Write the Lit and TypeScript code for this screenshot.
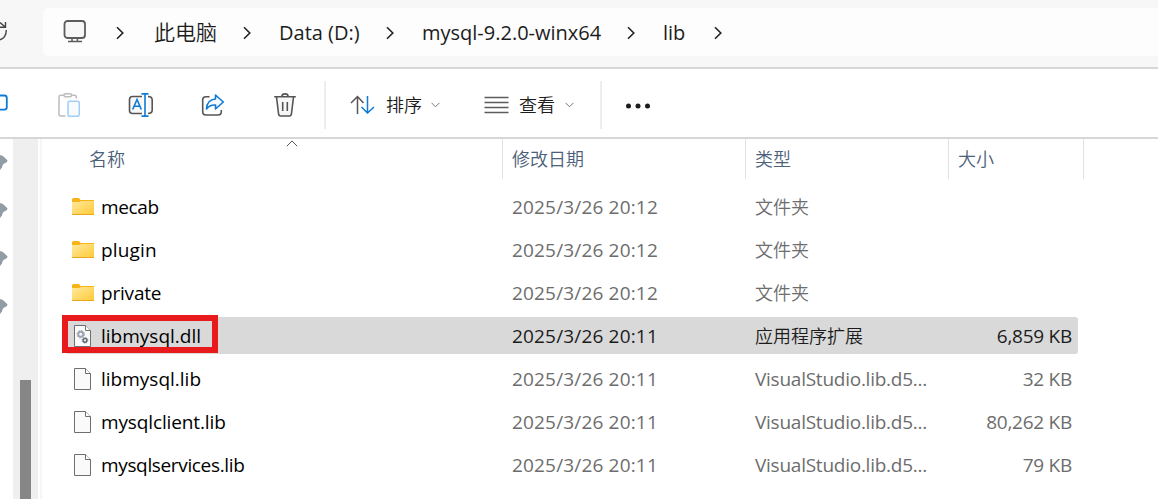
import { LitElement, html, css, svg, nothing } from 'lit';
import { customElement, property } from 'lit/decorators.js';
import { classMap } from 'lit/directives/class-map.js';
import { styleMap } from 'lit/directives/style-map.js';

type Kind = 'folder' | 'dll' | 'file';

interface Entry {
	name: string;
	date: string;
	type: string;
	size?: string;
	kind: Kind;
	selected?: boolean;
	// letter spacing of the name, px
	track: number;
}

const ENTRIES: Entry[] = [
	{ name: 'mecab', date: '2025/3/26 20:12', type: '文件夹', kind: 'folder', track: -0.35 },
	{ name: 'plugin', date: '2025/3/26 20:12', type: '文件夹', kind: 'folder', track: 0.15 },
	{ name: 'private', date: '2025/3/26 20:12', type: '文件夹', kind: 'folder', track: -0.2 },
	{ name: 'libmysql.dll', date: '2025/3/26 20:11', type: '应用程序扩展', size: '6,859 KB', kind: 'dll', selected: true, track: 0 },
	{ name: 'libmysql.lib', date: '2025/3/26 20:11', type: 'VisualStudio.lib.d5...', size: '32 KB', kind: 'file', track: 0 },
	{ name: 'mysqlclient.lib', date: '2025/3/26 20:11', type: 'VisualStudio.lib.d5...', size: '80,262 KB', kind: 'file', track: -0.13 },
	{ name: 'mysqlservices.lib', date: '2025/3/26 20:11', type: 'VisualStudio.lib.d5...', size: '79 KB', kind: 'file', track: -0.35 },
];

const chevron = html`
	<svg width="8" height="14" viewBox="0 0 8 14" fill="none" stroke="#222" stroke-width="1.6">
		<path d="M1 1.2L6.8 7L1 12.8" />
	</svg>
`;

const chevronDown = html`
	<svg width="9" height="6" viewBox="0 0 9 6" fill="none" stroke="#777" stroke-width="1">
		<path d="M.5 .8L4.5 4.8L8.5 .8" />
	</svg>
`;

/**
 * Address bar with the path of the open folder
 */
@customElement('path-bar')
export class PathBar extends LitElement {
	static styles = css`
		:host {
			display: flex;
			align-items: center;
			box-sizing: border-box;
			height: 69px;
			padding-bottom: 3px;
			background: #f7f7f7;
			border-bottom: 2px solid #d7d7d7;
			color: #1c1c1c;
			font-size: 20px;
		}
		.reload {
			width: 43px;
			height: 26px;
		}
		.path {
			display: grid;
			grid-template-columns: 73px 38px 89px 36px 107px 36px 205px 36px 51px 20px;
			align-items: center;
			flex: 1;
			height: 48px;
			box-sizing: border-box;
			background: #fdfdfd;
			border-radius: 6px 0 0 6px;
			white-space: nowrap;
		}
		.path svg {
			margin-top: 1px;
		}
		.path .pc {
			padding-left: 20px;
			margin-top: -2px;
		}
		.cjk {
			font-family: 'Noto Sans CJK SC', sans-serif;
			font-weight: 350;
			font-size: 21px;
			line-height: 24px;
			padding-bottom: 2px;
		}
		svg {
			display: block;
		}
	`;

	render() {
		return html`
			<svg class="reload" viewBox="0 0 43 26" fill="none" stroke="#444" stroke-width="1.4">
				<path d="M0 3.500L5 7.800M5.500 3V8.300H0M6.300 11Q6.300 18.500 0 20.800" />
			</svg>
			<div class="path">
				<svg class="pc" width="24" height="24" viewBox="0 0 24 24" fill="none" stroke="#5c5c5c" stroke-width="1.800">
					<rect x="1.500" y="2" width="20.500" height="17" rx="3" fill="#f7f7f7" />
					<path d="M9 19v3.500M14.500 19v3.500M5 22.600h14" stroke-width="1.500" />
				</svg>
				${chevron}
				<span class="cjk">此电脑</span>
				${chevron}
				<span>Data (D:)</span>
				${chevron}
				<span>mysql-9.2.0-winx64</span>
				${chevron}
				<span>lib</span>
				${chevron}
			</div>
		`;
	}
}

/**
 * Row of file commands
 */
@customElement('command-bar')
export class CommandBar extends LitElement {
	static styles = css`
		:host {
			display: flex;
			align-items: center;
			box-sizing: border-box;
			height: 70px;
			padding-top: 4px;
			background: #fff;
			border-bottom: 2px solid #d7d7d7;
			color: #1c1c1c;
			font-family: 'Noto Sans CJK SC', sans-serif;
			font-weight: 350;
			font-size: 18px;
		}
		svg {
			display: block;
			flex: none;
		}
		.icons {
			display: flex;
			gap: 48px;
			width: 324px;
		}
		.icons svg:nth-child(3) {
			margin-right: -2px;
		}
		.icons svg:nth-child(4) {
			margin-right: 1px;
		}
		.sep {
			width: 2px;
			height: 48px;
			background: #ededed;
		}
		.menu {
			display: flex;
			align-items: center;
		}
		.menu span {
			width: 46px;
			padding-left: 11px;
			padding-bottom: 2px;
			line-height: 24px;
		}
		.sort {
			box-sizing: border-box;
			padding-left: 24px;
			width: 158px;
		}
		.sort span {
			width: 45px;
		}
		.view {
			width: 116px;
		}
		.view span {
			padding-left: 10px;
		}
		.more {
			margin-left: 23px;
			margin-top: 1px;
		}
	`;

	render() {
		return html`
			<div class="icons">
				<svg width="8" height="24" viewBox="0 0 8 24" fill="none" stroke="#0f7ad6" stroke-width="1.800">
					<path d="M-2 2.500H4.500Q6.800 2.500 6.800 5V14Q6.800 16.700 4.500 16.700H-2" />
				</svg>
				<svg width="24" height="24" viewBox="0 0 24 24" fill="none" stroke="#bdbdbd" stroke-width="1.500">
					<path d="M8 2.200H4.500Q3 2.200 3 4V21Q3 23 4.800 23H9.500M16 2.200H18.500Q20.300 2.200 20.300 4V5.500" />
					<rect x="8" y=".8" width="7.500" height="3" rx="1.500" />
					<rect x="12" y="8.200" width="11.300" height="15" rx="1.800" fill="#f7fbfe" stroke="#a3cdf2" />
				</svg>
				<svg width="26" height="24" viewBox="0 0 26 24" fill="none" stroke="#555" stroke-width="1.600">
					<path d="M14 3.500H4.500Q1.500 3.500 1.500 6.500V17.500Q1.500 20.500 4.500 20.500H14M20 3.500Q24.200 3.500 24.200 7V17Q24.200 20.500 20 20.500" fill="#f7f7f7" />
					<g stroke="#0f7ad6">
						<path d="M17 1V23M13.500 .9H20.500M13.500 23.100H20.500" />
						<path d="M4.700 16.500L9 6.500L13.300 16.500M6 13.300H12" />
					</g>
				</svg>
				<svg width="24" height="24" viewBox="0 0 24 24" fill="none" stroke="#555" stroke-width="1.600">
					<path d="M9.500 3.700H6Q2.700 3.700 2.700 7V18.500Q2.700 22 6 22H18Q21.300 22 21.300 18.500V17" />
					<path d="M15.500 2L23.300 9L15.500 16V12Q10 11.500 6.500 16Q7 6.500 15.500 6Z" stroke="#0f7ad6" fill="#f6fafe" stroke-linejoin="round" />
				</svg>
				<svg width="24" height="24" viewBox="0 0 24 24" fill="none" stroke="#555" stroke-width="1.600">
					<path d="M3.500 4L5.500 20.500Q5.800 23 7.500 23H16.500Q18.200 23 18.500 20.500L20.500 4" fill="#f7f7f7" />
					<path d="M1.200 3.700H22.800M8.800 3.500Q9 .9 12 .9Q15 .9 15.200 3.500M9.700 9V18M14.300 9V18" />
				</svg>
			</div>
			<div class="sep"></div>
			<div class="menu sort">
				<svg width="25" height="20" viewBox="0 0 25 20" fill="none" stroke="#555" stroke-width="1.500">
					<path d="M7.500 19V2M1 8L7.500 1.500L13.500 8" />
					<path d="M17.500 1V18M11.500 12L17.500 18L24 12" stroke="#0f7ad6" />
				</svg>
				<span>排序</span>
				${chevronDown}
			</div>
			<div class="menu view">
				<svg width="25" height="18" viewBox="0 0 25 18" stroke="#5c5c5c" stroke-width="1.300">
					<path d="M.5 1.500H24.500M.5 6.500H24.500M.5 11.500H24.500M.5 16.500H24.500" />
				</svg>
				<span>查看</span>
				${chevronDown}
			</div>
			<div class="sep"></div>
			<svg class="more" width="26" height="6" viewBox="0 0 26 6" fill="#1c1c1c">
				<circle cx="3.500" cy="3" r="2.500" />
				<circle cx="13" cy="3" r="2.500" />
				<circle cx="22.500" cy="3" r="2.500" />
			</svg>
		`;
	}
}

/**
 * One line of the details view
 */
@customElement('file-row')
export class FileRow extends LitElement {
	static styles = css`
		:host {
			display: block;
			padding: 3px 0;
		}
		.row {
			position: relative;
			display: grid;
			grid-template-columns: 36px 411px 243px 193px 124px;
			align-items: center;
			box-sizing: border-box;
			width: 1013px;
			height: 37px;
			border-radius: 3px;
			color: #6d6d6d;
			white-space: nowrap;
			font-size: 19px;
		}
		.selected {
			background: #d9d9d9;
			color: #1c1c1c;
		}
		.name {
			color: #000;
		}
		.date {
			letter-spacing: 0.17px;
		}
		.type,
		.size {
			letter-spacing: -0.25px;
		}
		.cjk {
			font-family: 'Noto Sans CJK SC', sans-serif;
			font-weight: 350;
			font-size: 18px;
			letter-spacing: 0;
			line-height: 24px;
			padding-bottom: 1px;
		}
		.size {
			text-align: right;
		}
		svg {
			display: block;
			margin-left: 7px;
		}
		.mark {
			position: absolute;
			left: -3px;
			top: -2px;
			box-sizing: border-box;
			width: 156px;
			height: 38px;
			border: 6px solid #e81a1c;
		}
	`;

	@property({ attribute: false }) entry!: Entry;

	icon(kind: Kind) {
		if (kind === 'folder') {
			return html`
				<svg width="22" height="18" viewBox="0 0 22 18">
					<defs>
						<linearGradient id="front" x1="0" y1="0" x2="1" y2="1">
							<stop offset="0" stop-color="#ffe9a0" />
							<stop offset="1" stop-color="#ffc933" />
						</linearGradient>
					</defs>
					<path d="M0 1.500Q0 0 1.500 0H7L8.500 2H22V6H0Z" fill="#f7b416" />
					<path d="M0 4H7L9 3H22V17H0Z" fill="url(#front)" />
					<path d="M0 16H22V17H0Z" fill="#eaa81e" />
				</svg>
			`;
		}
		const gears = svg`
			<circle cx="8.700" cy="9.300" r="2.500" fill="none" stroke="#9aa5b1" stroke-width="1.900" />
			<circle cx="8.700" cy="9.300" r="3.800" fill="none" stroke="#9aa5b1" stroke-width="1" stroke-dasharray="1.500 1.480" />
			<circle cx="13" cy="15.300" r="1.900" fill="none" stroke="#5f6b76" stroke-width="1.500" />
			<circle cx="13" cy="15.300" r="2.900" fill="none" stroke="#5f6b76" stroke-width=".8" stroke-dasharray="1.150 1.120" />
		`;
		return html`
			<svg width="22" height="22" viewBox="0 0 22 22">
				<path d="M2.500 .5H13.500L18.500 5.500V21.500H2.500Z" fill="#fafafa" stroke="#6e6e6e" />
				<path d="M13.500 .5V5.500H18.500" fill="#fff" stroke="#6e6e6e" />
				${kind === 'dll' ? gears : nothing}
			</svg>
		`;
	}

	render() {
		const e = this.entry;
		const cjk = !e.type.startsWith('Visual');
		return html`
			<div class=${classMap({ row: true, selected: !!e.selected })}>
				${this.icon(e.kind)}
				<span class="name" style=${styleMap({ letterSpacing: `${e.track}px` })}>${e.name}</span>
				<span class="date">${e.date}</span>
				<span class=${classMap({ type: true, cjk })}>${e.type}</span>
				<span class="size">${e.size ?? ''}</span>
				${e.selected ? html`<div class="mark"></div>` : nothing}
			</div>
		`;
	}
}

@customElement('app-root')
export class AppRoot extends LitElement {
	static styles = css`
		:host {
			display: flex;
			flex-direction: column;
			width: 1158px;
			height: 499px;
			overflow: hidden;
			background: #fff;
			font-family: 'Open Sans', 'Noto Sans', 'Noto Sans CJK SC', sans-serif;
		}
		.main {
			display: flex;
			flex: 1;
			min-height: 0;
		}
		.pins {
			display: flex;
			flex-direction: column;
			gap: 32px;
			width: 13px;
			padding-top: 16px;
		}
		.scroll {
			box-sizing: border-box;
			width: 25px;
			padding: 241px 7px 0;
			background: #efefef;
		}
		.thumb {
			height: 100%;
			background: #868686;
		}
		.edge {
			width: 2px;
			margin-left: 2px;
			background: #f6f6f6;
		}
		.list {
			padding-left: 23px;
		}
		.head {
			display: grid;
			grid-template-columns: 438px 243px 203px 135px;
			height: 40px;
			margin-bottom: 6px;
			color: #4c607a;
			font-family: 'Noto Sans CJK SC', sans-serif;
			font-weight: 350;
			font-size: 18px;
			line-height: 38px;
		}
		.head div {
			position: relative;
			padding-left: 9px;
			border-right: 1px solid #e2e2e2;
		}
		.head div:first-child {
			padding-left: 24px;
		}
		.up {
			position: absolute;
			left: 221px;
			top: 1px;
		}
	`;

	render() {
		return html`
			<path-bar></path-bar>
			<command-bar></command-bar>
			<div class="main">
				<div class="pins">
					${[0, 1, 2, 3].map(() => html`
						<svg width="8" height="16" viewBox="0 0 8 16" fill="#929ca3">
							<path d="M0 0Q2 0 3.500 1.500L7.200 5Q7.800 6 7 7L3.500 9Q2.300 10 2 12.500L0 15Z" />
						</svg>
					`)}
				</div>
				<div class="scroll"><div class="thumb"></div></div>
				<div class="edge"></div>
				<div class="list">
					<div class="head">
						<div>名称
							<svg class="up" width="12" height="7" viewBox="0 0 12 7" fill="none" stroke="#555">
								<path d="M.8 6.200L6 1L11.200 6.200" />
							</svg>
						</div>
						<div>修改日期</div>
						<div>类型</div>
						<div>大小</div>
					</div>
					${ENTRIES.map((entry) => html`<file-row .entry=${entry}></file-row>`)}
				</div>
			</div>
		`;
	}
}
